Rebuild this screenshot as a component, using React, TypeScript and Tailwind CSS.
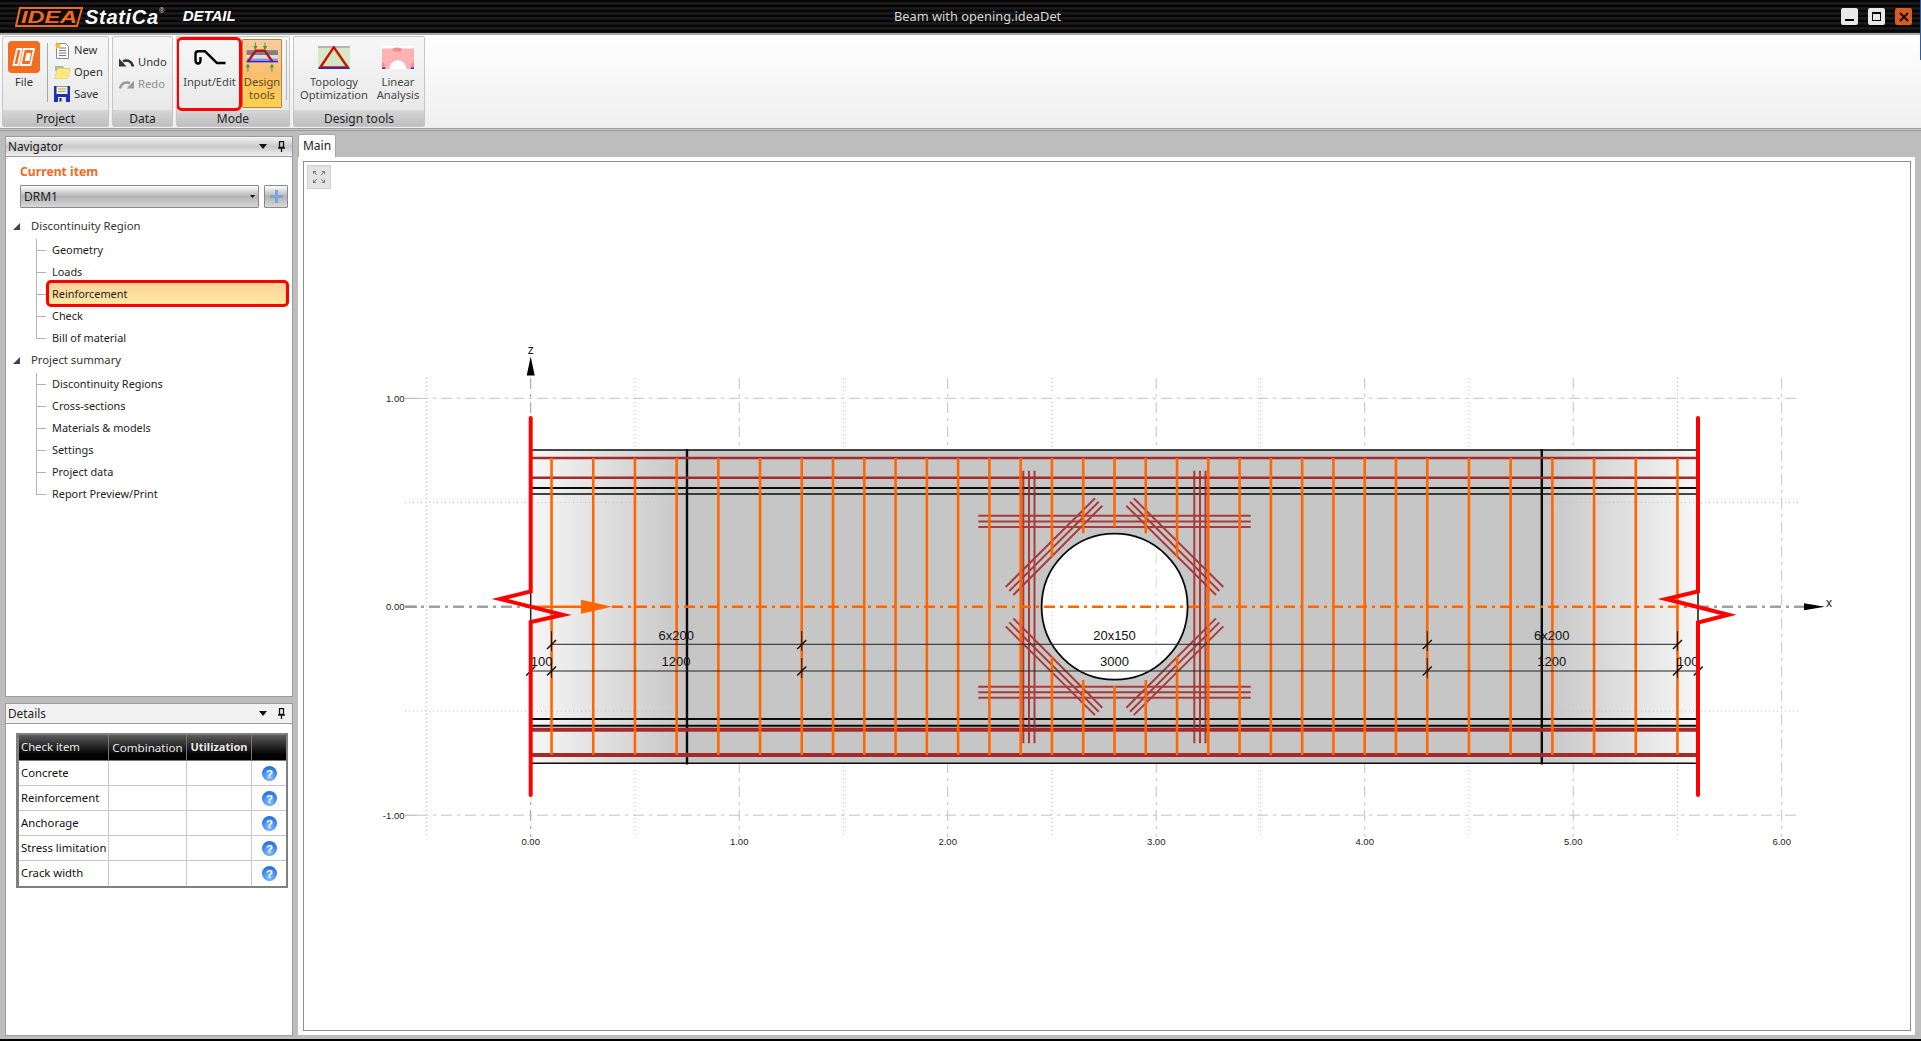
import { ReactNode } from 'react';

const X0 = 530.7;
const Y0 = 606.7;
const PX = 208.5;
const sx = (m: number) => X0 + m * PX;

const BROWN = '#a52a2a';
const ORANGE = '#ff6600';
const RED = '#ff0000';
const DASH_DOT = '11 5 3 5';

const NewIcon = () => (
  <svg width="16" height="17" viewBox="0 0 16 17">
    <path d="M2.5 1.5h9l3 3v12h-12z" fill="#fff" stroke="#8a8a8a" />
    <path d="M5 6h7M5 8.5h7M5 11h7M5 13.5h7" stroke="#777" />
    <path d="M4 0l1.2 2.4 2.6.3-2 1.7.6 2.6L4 5.7 1.6 7l.6-2.6-2-1.7 2.6-.3z" fill="#f6c12d" />
  </svg>
);

const OpenIcon = () => (
  <svg width="17" height="14" viewBox="0 0 17 14" className="shrink-0">
    <path d="M1 1h8l1 2h5v3H1z" fill="#b5b59a" />
    <path d="M3.5 3.5H16.5L13.5 13.5H.5z" fill="#fbe97d" stroke="#d8cf8a" strokeWidth=".7" />
  </svg>
);

const SaveIcon = () => (
  <svg width="16" height="16" viewBox="0 0 16 16">
    <rect width="16" height="16" fill="#1c2fc4" />
    <rect x="2.5" y=".5" width="11" height="7.5" fill="#fbf3c4" />
    <path d="M4 3h8M4 5.5h8" stroke="#b9a56a" />
    <rect x="4" y="11" width="8" height="5" fill="#e4e4e4" />
    <rect x="5.5" y="12" width="2" height="3.5" fill="#222" />
  </svg>
);

const UndoIcon = ({ color, flip }: { color: string; flip?: boolean }) => (
  <svg width="15" height="10" viewBox="0 0 15 10" className={flip ? '-scale-x-100' : ''}>
    <path d="M14 9.5C12.8 4.5 8.5 2.2 4 4.2" fill="none" stroke={color} strokeWidth="2.6" />
    <path d="M0 1.5V9.5H7.5z" fill={color} />
  </svg>
);

const DesignToolsIcon = () => (
  <svg width="36" height="36" viewBox="205 20 120 112">
    <rect x="214" y="50" width="104" height="16" fill="#7f7f7f" />
    <rect x="214" y="66" width="104" height="14" fill="#ddd" />
    <rect x="214" y="78" width="104" height="12" fill="#8e8ee8" />
    <path d="M218 88 244 52h30l26 36" fill="none" stroke="#b5121b" strokeWidth="8" />
    <path d="M214 88h104" stroke="#2323c8" strokeWidth="4" />
    {[243, 275].map((x) => (
      <g key={x} fill="#3f9a3f" stroke="#3f9a3f">
        <path d={`M${x} 24V44`} strokeWidth="3" />
        <path d={`M${x - 7} 36h14l-7 14z`} stroke="none" />
      </g>
    ))}
    {[218, 298].map((x) => (
      <g key={x} fill="#3f9a3f" stroke="#3f9a3f">
        <path d={`M${x} 100V122`} strokeWidth="3" />
        <path d={`M${x - 7} 108h14l-7 -14z`} stroke="none" />
      </g>
    ))}
  </svg>
);

const TopologyIcon = () => (
  <svg width="32" height="24" viewBox="423 35 95 71">
    <rect x="423" y="35" width="95" height="68" fill="#d8e7c8" />
    <rect x="423" y="35" width="95" height="6" fill="#b5b5b5" />
    <path d="M430 99 470 39l41 60z" fill="#cfe6c9" stroke="#c41212" strokeWidth="8" strokeLinejoin="round" />
    <path d="M438 95 470 46l33 49" fill="none" stroke="#f5e63a" strokeWidth="2" />
    <path d="M424 101h93" stroke="#2a2ac0" strokeWidth="5" />
  </svg>
);

const LinearIcon = () => (
  <svg width="32" height="24" viewBox="622 37 95 71">
    <rect x="622" y="37" width="95" height="68" fill="#fff" />
    <path d="M622 44h95v61h-22c-4-18-14-26-26-26s-22 8-26 26h-21z" fill="#ffb2b4" />
    <path d="M653 47c0-8 28-8 28 0 0 9-28 9-28 0z" fill="#f58b90" />
    <path d="M622 84c8 4 10 12 9 21h-9zM717 84c-8 4-10 12-9 21h9z" fill="#f58b90" />
    <path d="M622 103h10M707 103h10" stroke="#3b3bc8" strokeWidth="4" />
  </svg>
);

const FileIcon = () => (
  <div className="flex h-[32px] w-[32px] items-center justify-center rounded-[4px] bg-[#f26d22]">
    <svg width="26" height="24" viewBox="0 0 26 24">
      <path d="M6 4h4.5L7 20H2.5zM13 4h10l-3.5 16h-10z" fill="none" stroke="#fff" strokeWidth="1.8" />
      <path d="M15.5 8H20l-1.600 8h-4.5z" fill="#fff" />
    </svg>
  </div>
);

function RibbonPanel({ title, width, children }: { title: string; width: string; children: ReactNode }) {
  return (
    <div className={`flex h-[91px] shrink-0 flex-col overflow-hidden rounded-[2px] border border-[#c6c6c6] bg-gradient-to-b from-[#f7f7f7] to-[#e6e6e6] ${width}`}>
      <div className="relative flex min-h-0 flex-1">{children}</div>
      <div className="flex h-[16px] items-center justify-center bg-gradient-to-b from-[#d6d6d6] to-[#bfbfbf] pt-[2px] text-[12px] text-[#222]">
        {title}
      </div>
    </div>
  );
}

function RibbonRow({ icon, label, muted }: { icon: ReactNode; label: string; muted?: boolean }) {
  return (
    <div className={`flex h-[22px] items-center gap-[4px] ${muted ? 'text-[#8f8f8f]' : 'text-[#333]'}`}>
      <div className="flex w-[16px] items-center justify-center">{icon}</div>
      <span>{label}</span>
    </div>
  );
}

function RibbonLabel({ lines, className }: { lines: string[]; className?: string }) {
  return (
    <div className={`text-center leading-[12.5px] whitespace-nowrap ${className ?? 'text-[#444]'}`}>
      {lines.map((l) => (
        <div key={l}>{l}</div>
      ))}
    </div>
  );
}

const Ribbon = () => (
  <div className="flex h-[93px] shrink-0 gap-[3px] bg-gradient-to-b from-white to-[#efefef] pt-[1px] pl-[2px] text-[11.2px]">
    <RibbonPanel title="Project" width="w-[107px]">
      <div className="ml-[5px] flex w-[32px] flex-col items-center pt-[4px]">
        <FileIcon />
        <div className="mt-[1px] text-[#333]">File</div>
      </div>
      <div className="mt-[6px] mb-[8px] ml-[7px] w-px bg-[#a8a8a8]" />
      <div className="ml-[6px] flex flex-col pt-[2px]">
        <RibbonRow icon={<NewIcon />} label="New" />
        <RibbonRow icon={<OpenIcon />} label="Open" />
        <RibbonRow icon={<SaveIcon />} label="Save" />
      </div>
    </RibbonPanel>
    <RibbonPanel title="Data" width="w-[61px]">
      <div className="flex flex-col pt-[14px] pl-[5px]">
        <RibbonRow icon={<UndoIcon color="#333" />} label="Undo" />
        <RibbonRow icon={<UndoIcon color="#9a9a9a" flip />} label="Redo" muted />
      </div>
    </RibbonPanel>
    <RibbonPanel title="Mode" width="w-[114px]">
      <div className="flex w-[65px] flex-col items-center pt-[13px]">
        <svg width="32" height="15" viewBox="0 0 32 15">
          <path d="M1.5 11V4Q1.5 1.3 4 1.3H11L23 13H31.5M1.5 10Q1.5 13.5 4 13.5 6.5 13.5 6.5 10V7" fill="none" stroke="#000" strokeWidth="2.4" />
        </svg>
        <div className="mt-[9px] text-[#444]">Input/Edit</div>
      </div>
      <div className="mt-[2px] flex h-[69px] w-[40px] flex-col items-center rounded-[1px] border border-[#a98a45] bg-gradient-to-b from-[#fbcb9f] via-[#fbbf6c] to-[#ffcf4d]">
        <DesignToolsIcon />
        <RibbonLabel lines={['Design', 'tools']} className="text-[#5b4a16]" />
      </div>
      <div className="mt-[3px] mb-[10px] ml-[4px] w-px bg-[#b4b4b4]" />
      <div className="absolute top-0 -left-[1px] h-[74px] w-[66px] rounded-[6px] border-[3px] border-[#ff0000]" />
    </RibbonPanel>
    <RibbonPanel title="Design tools" width="w-[132px]">
      <div className="ml-[3px] flex w-[74px] flex-col items-center pt-[9px]">
        <TopologyIcon />
        <RibbonLabel lines={['Topology', 'Optimization']} className="mt-[6px] text-[#444]" />
      </div>
      <div className="ml-[1px] flex w-[52px] flex-col items-center pt-[9px]">
        <LinearIcon />
        <RibbonLabel lines={['Linear', 'Analysis']} className="mt-[6px] text-[#444]" />
      </div>
    </RibbonPanel>
  </div>
);

const TitleBar = () => (
  <div className="relative flex h-[33px] shrink-0 items-center bg-[repeating-linear-gradient(180deg,#050505_0px,#050505_2px,#2b2b2b_3px,#0c0c0c_4px,#1a1a1a_5px)] pr-[9px] pl-[15px]">
    <svg width="68" height="20" viewBox="0 0 68 20" className="shrink-0">
      <polygon points="5,1 67,1 62,19 1,19" fill="#0b0b0b" stroke="#f26b1d" strokeWidth="2" />
      <text x="6" y="15.5" fontFamily="Liberation Sans" fontSize="16" fontWeight="700" fontStyle="italic" fill="#f26b1d" textLength="56" lengthAdjust="spacingAndGlyphs">IDEA</text>
    </svg>
    <span className="ml-[2px] font-['Liberation_Sans'] text-[20px] font-bold tracking-[0.7px] text-white italic">StatiCa</span>
    <span className="mb-[10px] text-[7px] text-[#ccc]">®</span>
    <span className="ml-[18px] font-['Liberation_Sans'] text-[15px] font-bold text-white italic">DETAIL</span>
    <span className="absolute left-[894px] font-['Noto_Sans'] text-[12.8px] text-[#d8d8d8]">Beam with opening.ideaDet</span>
    <div className="ml-auto flex gap-[10px]">
      <div className="flex h-[17px] w-[17px] items-end justify-center rounded-[2px] bg-[#e8e8e8] pb-[4px]">
        <div className="h-[2px] w-[9px] bg-black" />
      </div>
      <div className="flex h-[17px] w-[17px] items-center justify-center rounded-[2px] bg-[#e8e8e8]">
        <div className="h-[9px] w-[9px] border-[1.5px] border-t-[2px] border-black" />
      </div>
      <div className="flex h-[17px] w-[17px] items-center justify-center rounded-[2px] bg-[#d95c20]">
        <svg width="10" height="10" viewBox="0 0 10 10">
          <path d="M1 1l8 8M9 1l-8 8" stroke="#111" strokeWidth="2" />
        </svg>
      </div>
    </div>
  </div>
);

function PanelHeader({ title, flat }: { title: string; flat?: boolean }) {
  return (
    <div className={`flex h-[20px] shrink-0 items-center border-b border-[#9c9c9c] pr-[7px] pl-[2px] text-[11.8px] text-[#222] ${flat ? 'bg-[#f1f1f1]' : 'bg-gradient-to-b from-[#f4f4f4] via-[#c9c9c9] to-[#f0f0f0]'}`}>
      <span>{title}</span>
      <svg width="8" height="5" viewBox="0 0 8 5" className="mr-[11px] ml-auto">
        <path d="M0 0h8L4 5z" fill="#111" />
      </svg>
      <svg width="7" height="11" viewBox="0 0 7 11">
        <path d="M1.5.5h4v6h-4zM0 7h7M3.5 7v4" fill="none" stroke="#111" strokeWidth="1.3" />
      </svg>
    </div>
  );
}

function TreeItem({ label, last, selected }: { label: string; last?: boolean; selected?: boolean }) {
  return (
    <li className="relative flex h-[22px] items-center pl-[16px]">
      <span className={`absolute top-0 left-0 w-px bg-[#b4b4b4] ${last ? 'h-[11px]' : 'h-full'}`} />
      <span className="absolute top-[11px] left-0 h-px w-[10px] bg-[#b4b4b4]" />
      {selected && (
        <span className="absolute -top-[3px] right-[3px] -bottom-[2px] left-[10px] rounded-[5px] border-[3px] border-[#ff0000] bg-gradient-to-b from-[#fcd39a] to-[#fee8a2]" />
      )}
      <span className="relative">{label}</span>
    </li>
  );
}

function TreeGroup({ label, items, selected }: { label: string; items: string[]; selected?: string }) {
  return (
    <div>
      <div className="flex h-[24px] items-center pb-[2px] text-[#333]">
        <svg width="7" height="7" viewBox="0 0 7 7" className="ml-[7px]">
          <path d="M7 0v7H0z" fill="#444" />
        </svg>
        <span className="ml-[11px] text-[11.3px]">{label}</span>
      </div>
      <ul className="ml-[30px] text-[10.9px] text-[#222]">
        {items.map((it, i) => (
          <TreeItem key={it} label={it} last={i === items.length - 1} selected={it === selected} />
        ))}
      </ul>
    </div>
  );
}

const Navigator = () => (
  <div className="flex h-[561px] shrink-0 flex-col border border-[#9c9c9c] bg-white">
    <PanelHeader title="Navigator" />
    <div className="pt-[6px]">
      <div className="pl-[14px] text-[12.2px] leading-[18px] font-bold text-[#f26a21]">Current item</div>
      <div className="mt-[4px] flex gap-[5px] pl-[14px]">
        <div className="flex h-[23px] w-[239px] items-center rounded-[1px] border border-[#8a8a8a] bg-gradient-to-b from-white via-[#b4b4b4] to-[#d8d8d8] pr-[3px] pl-[3px] text-[12px] text-[#222]">
          <span>DRM1</span>
          <svg width="5" height="3" viewBox="0 0 5 3" className="ml-auto">
            <path d="M0 0h5L2.5 3z" fill="#111" />
          </svg>
        </div>
        <div className="flex h-[23px] w-[24px] items-center justify-center rounded-[1px] border border-[#8a8a8a] bg-gradient-to-b from-white via-[#b4b4b4] to-[#d8d8d8]">
          <svg width="13" height="13" viewBox="0 0 13 13">
            <path d="M5 0h3v5h5v3H8v5H5V8H0V5h5z" fill="#7aa6dc" />
          </svg>
        </div>
      </div>
      <div className="mt-[7px]">
        <TreeGroup
          label="Discontinuity Region"
          items={['Geometry', 'Loads', 'Reinforcement', 'Check', 'Bill of material']}
          selected="Reinforcement"
        />
        <TreeGroup
          label="Project summary"
          items={['Discontinuity Regions', 'Cross-sections', 'Materials & models', 'Settings', 'Project data', 'Report Preview/Print']}
        />
      </div>
    </div>
  </div>
);

const HelpIcon = () => (
  <svg width="15" height="15" viewBox="0 0 15 15">
    <defs>
      <radialGradient id="helpFill" cx="50%" cy="75%" r="70%">
        <stop offset="0%" stopColor="#8cc2ff" />
        <stop offset="100%" stopColor="#1f6fe0" />
      </radialGradient>
    </defs>
    <circle cx="7.5" cy="7.5" r="7.5" fill="url(#helpFill)" />
    <text x="7.5" y="11.5" textAnchor="middle" fontFamily="Liberation Sans" fontWeight="700" fontSize="11.5" fill="#fff">?</text>
  </svg>
);

const CHECK_ROWS = ['Concrete', 'Reinforcement', 'Anchorage', 'Stress limitation', 'Crack width'];
const COLS = 'grid grid-cols-[90px_78px_65px_34px]';

const Details = () => (
  <div className="flex min-h-0 flex-1 flex-col border border-[#9c9c9c] bg-white">
    <PanelHeader title="Details" flat />
    <div className="mx-[10px] mt-[9px] w-[272px] border-2 border-[#808080] border-l-[3px] text-[11.3px]">
      <div className={`${COLS} h-[26px] border-b border-[#777] bg-gradient-to-b from-[#5c5c5c] via-[#222] to-[#000] text-[#e8e8e8]`}>
        <div className="flex items-center border-r border-[#777] pl-[2px]">Check item</div>
        <div className="flex items-center justify-center border-r border-[#777] text-[11.6px] whitespace-nowrap">Combination</div>
        <div className="flex items-center justify-center border-r border-[#777] text-[11px] font-bold whitespace-nowrap">Utilization</div>
        <div />
      </div>
      {CHECK_ROWS.map((row, i) => (
        <div key={row} className={`${COLS} h-[25px] text-[#111] ${i < CHECK_ROWS.length - 1 ? 'border-b border-[#c8c8c8]' : ''}`}>
          <div className="flex items-center border-r border-[#c8c8c8] pl-[2px] whitespace-nowrap">{row}</div>
          <div className="border-r border-[#c8c8c8]" />
          <div className="border-r border-[#c8c8c8]" />
          <div className="flex items-center justify-center">
            <HelpIcon />
          </div>
        </div>
      ))}
    </div>
  </div>
);

// tick positions along the beam, in metres
const LOWER_TICKS = [0, 0.1, 1.3, 4.3, 5.5, 5.6];
const UPPER_TICKS = [0.1, 1.3, 4.3, 5.5];
const DIM_TEXT: [string, number, number][] = [
  ['6x200', 676.3, 639.5],
  ['1200', 676, 665.5],
  ['100', 541.7, 665.5],
  ['20x150', 1114.5, 639.5],
  ['3000', 1114.5, 665.5],
  ['6x200', 1551.7, 639.5],
  ['1200', 1551.7, 665.5],
  ['100', 1687.7, 665.5],
];

const stirrups = () => {
  const out: { x: number; cut?: [number, number] }[] = [];
  for (let i = 0; i < 6; i++) out.push({ x: sx(0.1 + 0.2 * i) });
  for (let k = 0; k <= 20; k++) {
    const x = sx(1.3 + 0.15 * k);
    let cut: [number, number] | undefined;
    if (k === 8 || k === 12) cut = [556.7, 656.7];
    if (k === 9 || k === 11) cut = [533.3, 680];
    if (k === 10) cut = [527, 686];
    out.push({ x, cut });
  }
  for (let i = 1; i <= 6; i++) out.push({ x: sx(4.3 + 0.2 * i) });
  return out;
};

const DIAGONALS: [number, number, number, number][] = [
  [1005.7, 587, 1095, 498.3],
  [1009.3, 591, 1098.7, 501.7],
  [1013.3, 595, 1102.3, 505.7],
  [1126.3, 505.7, 1216, 595],
  [1130, 501.7, 1219.3, 591],
  [1133.7, 498.3, 1223.3, 587],
];

const Drawing = () => (
  <svg width="1606" height="868" viewBox="304 162 1606 868" className="block font-['Liberation_Sans']">
    <defs>
      <linearGradient id="beamFill" gradientUnits="userSpaceOnUse" x1="531" x2="1698" y1="0" y2="0">
        <stop offset="0" stopColor="#f6f6f6" />
        <stop offset="0.1337" stopColor="#c6c6c6" />
        <stop offset="0.8663" stopColor="#c6c6c6" />
        <stop offset="1" stopColor="#f6f6f6" />
      </linearGradient>
    </defs>

    {/* grid */}
    {[1, 2, 3, 4, 5, 6].map((m) => (
      <line key={m} x1={sx(m)} x2={sx(m)} y1="378" y2="837" stroke="#c2c2c2" strokeWidth="1" strokeDasharray={DASH_DOT} />
    ))}
    {[-0.5, 0.5, 1.5, 2.5, 3.5, 4.5, 5.5].map((m) => (
      <line key={m} x1={sx(m)} x2={sx(m)} y1="378" y2="837" stroke="#c2c2c2" strokeWidth="1" strokeDasharray="1 3" />
    ))}
    <line x1={X0} x2={X0} y1="378" y2="837" stroke="#999" strokeDasharray={DASH_DOT} />
    {[398.3, 815.2].map((y) => (
      <line key={y} x1="417" x2="1801" y1={y} y2={y} stroke="#c2c2c2" strokeDasharray={DASH_DOT} />
    ))}
    {[502.4, 711].map((y) => (
      <line key={y} x1="405" x2="1801" y1={y} y2={y} stroke="#c2c2c2" strokeDasharray="1 3" />
    ))}

    {/* concrete */}
    <rect x="531" y="450" width="1167" height="313" fill="url(#beamFill)" />
    {[502.4, 711].map((y) => (
      <g key={y}>
        <line x1="533" x2="681" y1={y} y2={y} stroke="#c2c2c2" strokeDasharray="1 3" />
        <line x1="1545" x2="1696" y1={y} y2={y} stroke="#c2c2c2" strokeDasharray="1 3" />
      </g>
    ))}
    <circle cx="1114.6" cy={Y0} r="73" fill="#fff" />
    <line x1="1051.9" x2="1051.9" y1="555" y2="657" stroke="#c8c8c8" strokeDasharray="1 3" />
    <line x1="1156.2" x2="1156.2" y1="553" y2="655" stroke="#d8d8d8" strokeDasharray={DASH_DOT} />

    {/* black outline and stringers */}
    {[[450, 1.6], [488, 2], [494, 1.6], [719, 2], [725.7, 2], [763.3, 1.6]].map(([y, w]) => (
      <line key={y} x1="532" x2="1696" y1={y} y2={y} stroke="#0a0a0a" strokeWidth={w} />
    ))}
    {[687, 1541.8].map((x) => (
      <line key={x} x1={x} x2={x} y1="449" y2="764.5" stroke="#0a0a0a" strokeWidth="2.4" />
    ))}

    {/* longitudinal bars */}
    {[[458, 2.4], [477.7, 2.4], [729.7, 4], [755, 4]].map(([y, w]) => (
      <line key={y} x1="529" x2="1700" y1={y} y2={y} stroke={BROWN} strokeWidth={w} />
    ))}

    {/* opening bars */}
    <g stroke={BROWN} strokeWidth="2" opacity="0.88">
      {[1023.3, 1029, 1034.5, 1194.3, 1200, 1205.5].map((x) => (
        <line key={x} x1={x} x2={x} y1="470.7" y2="743.3" />
      ))}
      {[515.7, 521.5, 527, 686.7, 692.2, 697.7].map((y) => (
        <line key={y} x1="978.3" x2="1250.7" y1={y} y2={y} />
      ))}
      {DIAGONALS.map(([a, b, c, d]) => (
        <g key={a}>
          <line x1={a} y1={b} x2={c} y2={d} />
          <line x1={a} y1={2 * Y0 - b} x2={c} y2={2 * Y0 - d} />
        </g>
      ))}
    </g>

    {/* stirrups */}
    {stirrups().map(({ x, cut }) =>
      cut ? (
        <g key={x} stroke={ORANGE} strokeWidth="2.6">
          <line x1={x} x2={x} y1="458" y2={cut[0]} />
          <line x1={x} x2={x} y1={cut[1]} y2="755" />
        </g>
      ) : (
        <line key={x} x1={x} x2={x} y1="458" y2="755" stroke={ORANGE} strokeWidth="2.6" />
      ),
    )}

    {/* centre line */}
    <line x1="405" x2="531" y1={Y0} y2={Y0} stroke="#a0a0a0" strokeWidth="2.4" strokeDasharray={DASH_DOT} />
    <line x1="1698" x2="1804" y1={Y0} y2={Y0} stroke="#a0a0a0" strokeWidth="2.4" strokeDasharray={DASH_DOT} />
    <line x1="531" x2="582" y1={Y0} y2={Y0} stroke={ORANGE} strokeWidth="2.4" />
    <line x1="612" x2="1696" y1={Y0} y2={Y0} stroke={ORANGE} strokeWidth="2.4" strokeDasharray={DASH_DOT} />
    <polygon points={`581,${Y0 - 7} 612,${Y0} 581,${Y0 + 7}`} fill={ORANGE} />

    <circle cx="1114.6" cy={Y0} r="73" fill="none" stroke="#0a0a0a" strokeWidth="1.8" />

    {/* dimensions */}
    <line x1={sx(0.1)} x2={sx(5.5)} y1="644.3" y2="644.3" stroke="#222" strokeWidth="1" />
    <line x1={X0} x2={sx(5.6)} y1="671" y2="671" stroke="#222" strokeWidth="1" />
    {UPPER_TICKS.map((m) => (
      <g key={m} stroke="#111">
        <line x1={sx(m)} x2={sx(m)} y1="631" y2="651" strokeWidth="1" />
        <line x1={sx(m) - 4.5} x2={sx(m) + 4.5} y1="649" y2="640" strokeWidth="1.5" />
      </g>
    ))}
    {LOWER_TICKS.map((m) => (
      <g key={m} stroke="#111">
        <line x1={sx(m)} x2={sx(m)} y1="658" y2="678" strokeWidth="1" />
        <line x1={sx(m) - 4.5} x2={sx(m) + 4.5} y1="675.5" y2="666.5" strokeWidth="1.5" />
      </g>
    ))}
    {DIM_TEXT.map(([t, x, y]) => (
      <text key={`${t}${x}`} x={x} y={y} textAnchor="middle" fontSize="13" fill="#111">{t}</text>
    ))}

    {/* supports */}
    <line x1={X0} x2={X0} y1="592" y2="622" stroke="#222" strokeWidth="1.5" />
    <line x1="1698" x2="1698" y1="592" y2="622" stroke="#111" strokeWidth="1.5" />
    <path d="M530.7 418V591.5L500 599 563 614.8 530.7 622V795" fill="none" stroke={RED} strokeWidth="4" strokeLinecap="round" strokeMiterlimit="12" />
    <path d="M1698 418V591.5L1666 599 1728.5 614.8 1698 622.5V795" fill="none" stroke={RED} strokeWidth="4" strokeLinecap="round" strokeMiterlimit="12" />

    {/* axes */}
    <polygon points={`${X0},356.5 ${X0 + 4},375.5 ${X0 - 4},375.5`} fill="#000" />
    <text x={X0} y="354" textAnchor="middle" fontSize="12" fill="#111">z</text>
    <polygon points={`1804,${Y0 - 3.5} 1825,${Y0} 1804,${Y0 + 3.5}`} fill="#000" />
    <text x="1826" y="606.5" fontSize="12" fill="#111">x</text>

    {/* labels */}
    {[['1.00', 398.3], ['0.00', Y0], ['-1.00', 815.2]].map(([t, y]) => (
      <g key={t}>
        <line x1="405" x2="417" y1={y} y2={y} stroke={t === '0.00' ? '#999' : '#aaa'} strokeWidth={t === '0.00' ? 2 : 1} />
        <text x="404.5" y={Number(y) + 3.5} textAnchor="end" fontSize="9.5" fill="#222">{t}</text>
      </g>
    ))}
    {[0, 1, 2, 3, 4, 5, 6].map((m) => (
      <text key={m} x={sx(m)} y="845" textAnchor="middle" fontSize="9.5" fill="#222">{`${m}.00`}</text>
    ))}
  </svg>
);

const ExpandButton = () => (
  <div className="absolute top-[3px] left-[3px] flex h-[24px] w-[24px] items-center justify-center border border-[#d0d0d0] bg-[#e4e4e4]">
    <svg width="14" height="14" viewBox="0 0 14 14">
      <path d="M1 1h3.5L1 4.5zM13 1H9.5L13 4.5zM1 13h3.5L1 9.5zM13 13H9.5L13 9.5z" fill="#7d7d7d" />
      <path d="M2 2l3 3M12 2L9 5M2 12l3-3M12 12L9 9" stroke="#7d7d7d" />
    </svg>
  </div>
);

export default function App() {
  return (
    <div className="relative flex h-[1041px] w-[1921px] flex-col overflow-hidden bg-[#bdbdbd] font-['Noto_Sans',sans-serif]">
      <TitleBar />
      <div className="h-[2px] shrink-0 bg-[#a6a6a6]" />
      <Ribbon />
      <div className="h-[3px] shrink-0 border-y border-[#9a9a9a] bg-[#c8c8c8]" />

      <div className="flex min-h-0 flex-1">
        <div className="ml-[5px] flex w-[288px] shrink-0 flex-col gap-[6px] pt-[5px] pb-[3px]">
          <Navigator />
          <Details />
        </div>
        <div className="ml-[5px] flex min-w-0 flex-1 flex-col pt-[3px] pr-[6px] pb-[4px]">
          <div className="flex h-[23px] shrink-0 items-end">
            <div className="flex h-[23px] w-[38px] items-center justify-center rounded-t-[2px] border border-b-0 border-[#a8a8a8] bg-white text-[12px] text-[#222]">
              Main
            </div>
          </div>
          <div className="min-h-0 flex-1 bg-white py-[4px] pr-[4px] pl-[5px]">
            <div className="relative h-full border border-[#8f8f8f] bg-white">
              <Drawing />
              <ExpandButton />
            </div>
          </div>
        </div>
      </div>

      <div className="h-[2px] shrink-0 bg-black" />
      <div className="absolute top-0 right-0 h-[60px] w-px bg-[#2a5fa8]" />
    </div>
  );
}
